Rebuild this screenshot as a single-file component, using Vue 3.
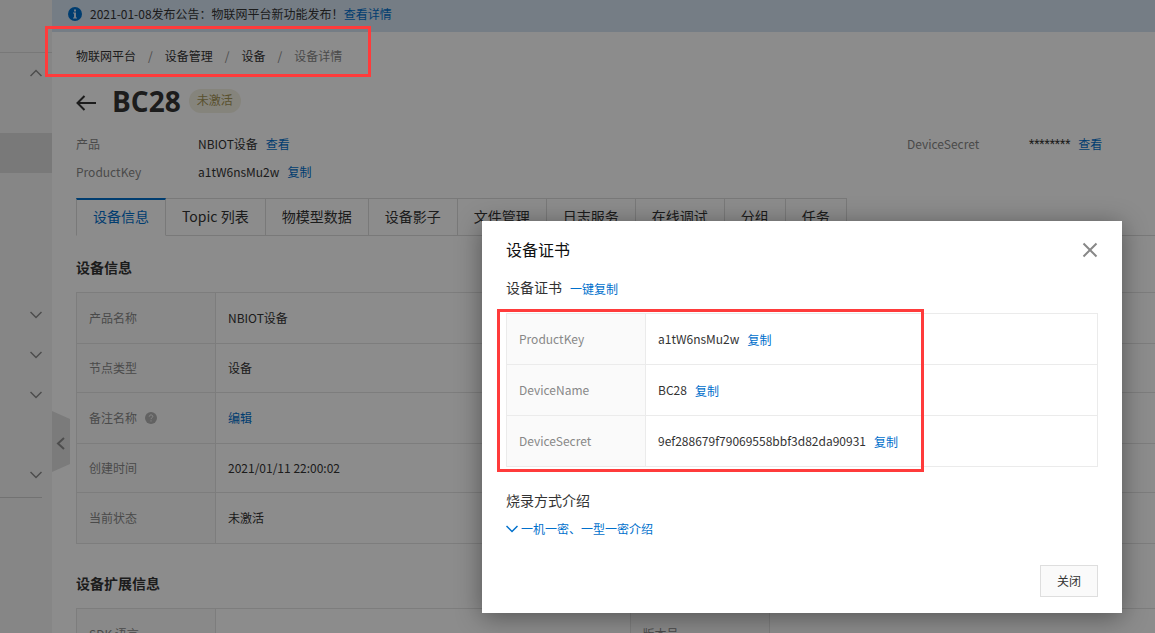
<script setup>
const crumbs = ['物联网平台', '设备管理', '设备', '设备详情']
const tabs = ['设备信息', 'Topic 列表', '物模型数据', '设备影子', '文件管理', '日志服务', '在线调试', '分组', '任务']
const rows = [
  { label: '产品名称', value: 'NBIOT设备' },
  { label: '节点类型', value: '设备' },
  { label: '备注名称', link: '编辑', help: true },
  { label: '创建时间', value: '2021/01/11 22:00:02' },
  { label: '当前状态', value: '未激活' }
]
const cert = [
  { label: 'ProductKey', value: 'a1tW6nsMu2w' },
  { label: 'DeviceName', value: 'BC28' },
  { label: 'DeviceSecret', value: '9ef288679f79069558bbf3d82da90931' }
]
</script>

<template>
  <div class="shell">
    <div class="page">
      <nav class="side" aria-label="导航">
        <div class="side-head"></div>
        <button class="side-item" aria-label="收起分组">
          <svg width="12" height="8" viewBox="0 0 12 8"><path d="M.500 7 6 1.500 11.500 7" /></svg>
        </button>
        <div class="side-item"></div>
        <div class="side-item active"></div>
        <div class="side-item"></div>
        <div class="side-item"></div>
        <div class="side-item"></div>
        <div class="side-group">
          <button v-for="n in 3" :key="n" class="side-item" aria-label="展开分组">
            <svg width="12" height="8" viewBox="0 0 12 8"><path d="M.500 1 6 6.500 11.500 1" /></svg>
          </button>
          <div class="side-item"></div>
          <button class="side-item" aria-label="展开分组">
            <svg width="12" height="8" viewBox="0 0 12 8"><path d="M.500 1 6 6.500 11.500 1" /></svg>
          </button>
        </div>
        <button class="handle" aria-label="收起导航">
          <svg width="18" height="61" viewBox="0 0 18 61">
            <path class="handle-bg" d="M0 0 18 8V53L0 61Z" />
            <path d="M12 27 6 32.500 12 38" />
          </svg>
        </button>
      </nav>

      <main class="main">
        <div class="notice">
          <svg width="14" height="14" viewBox="0 0 14 14">
            <circle cx="7" cy="7" r="7" fill="#0070cc" />
            <path d="M6 2.500h2v2H6zM5 5.500h3v5h1v1H5v-1h1v-4H5z" fill="#d6e8fb" />
          </svg>
          <span>2021-01-08发布公告：物联网平台新功能发布！</span>
          <a href="#">查看详情</a>
        </div>
        <div class="content">
          <div class="crumbs">
            <template v-for="(c, i) in crumbs" :key="c">
              <span v-if="i" class="slash">/</span>
              <a v-if="i < 3" href="#" class="crumb">{{ c }}</a>
              <span v-else class="crumb last">{{ c }}</span>
            </template>
          </div>
          <div class="title-row">
            <button class="back" aria-label="返回">
              <svg width="20" height="16" viewBox="0 0 20 16"><path d="M20 8H2M8.500 1 1.500 8l7 7" /></svg>
            </button>
            <h1>BC28</h1>
            <span class="badge">未激活</span>
          </div>
          <div class="info">
            <div class="field"><span class="key">产品</span><span>NBIOT设备</span><a href="#">查看</a></div>
            <div class="field"><span class="key">DeviceSecret</span><span class="stars">********</span><a href="#">查看</a></div>
            <div class="field"><span class="key">ProductKey</span><span>a1tW6nsMu2w</span><a href="#">复制</a></div>
          </div>
          <div class="tabs" role="tablist">
            <button v-for="(t, i) in tabs" :key="t" role="tab" :class="['tab', { on: i === 0 }]">{{ t }}</button>
          </div>
          <h2>设备信息</h2>
          <table class="grid">
            <tbody>
              <tr v-for="r in rows" :key="r.label">
                <th scope="row">
                  <div class="cell">
                    {{ r.label }}
                    <svg v-if="r.help" width="12" height="12" viewBox="0 0 12 12">
                      <circle cx="6" cy="6" r="6" fill="#b2b2b2" />
                      <path d="M4.200 4.700C4.200 2.300 7.900 2.400 7.800 4.600 7.700 5.700 6 5.800 6 7.200M6 8.300v1.200" class="mark" />
                    </svg>
                  </div>
                </th>
                <td colspan="3"><a v-if="r.link" href="#">{{ r.link }}</a><span v-else>{{ r.value }}</span></td>
              </tr>
            </tbody>
          </table>
          <h2 class="second">设备扩展信息</h2>
          <table class="grid">
            <tbody>
              <tr>
                <th scope="row">SDK 语言</th>
                <td></td>
                <th scope="row">版本号</th>
                <td></td>
              </tr>
            </tbody>
          </table>
        </div>
      </main>
    </div>

    <div class="mask">
      <section class="dialog" role="dialog" aria-labelledby="dialog-title">
        <header>
          <h3 id="dialog-title">设备证书</h3>
          <button class="close" aria-label="关闭窗口">
            <svg width="16" height="16" viewBox="0 0 16 16"><path d="M1.500 1.500l13 13M14.500 1.500l-13 13" /></svg>
          </button>
        </header>
        <div class="sub"><h4>设备证书</h4><a href="#">一键复制</a></div>
        <div class="cert">
          <table>
            <tbody>
              <tr v-for="c in cert" :key="c.label">
                <th scope="row">{{ c.label }}</th>
                <td><div class="cell"><span>{{ c.value }}</span><a href="#">复制</a></div></td>
              </tr>
            </tbody>
          </table>
          <div class="marker cert-marker"></div>
        </div>
        <h4>烧录方式介绍</h4>
        <a href="#" class="more">
          <svg width="12" height="8" viewBox="0 0 12 8"><path d="M.500 1 6 6.500 11.500 1" /></svg>一机一密、一型一密介绍
        </a>
        <footer><button class="ok">关闭</button></footer>
      </section>
    </div>
    <div class="marker crumb-marker"></div>
  </div>
</template>

<style>
body {
  margin: 0;
}
</style>

<style scoped>
.shell {
  position: relative;
  height: 100vh;
  overflow: hidden;
  background: #fff;
  color: #333;
  font: 12px/20px "Noto Sans CJK SC", "Open Sans", sans-serif;
}
.shell * {
  box-sizing: border-box;
}
a {
  color: #0070cc;
  text-decoration: none;
}
button {
  font: inherit;
  color: inherit;
  border: 0;
  padding: 0;
  background: none;
}
svg {
  display: block;
  flex: none;
  fill: none;
}
h1, h2, h3, h4 {
  margin: 0;
}
.page {
  display: flex;
  min-width: 1208px;
  min-height: 100%;
}
.side {
  position: relative;
  flex: none;
  width: 52px;
  background: #f5f5f5;
}
.side-head {
  height: 53px;
  border-bottom: 1px solid #dadada;
}
.side-item {
  display: flex;
  align-items: center;
  justify-content: flex-end;
  width: 100%;
  height: 40px;
  padding-right: 10px;
}
.side-item path, .handle path {
  stroke: #8c8c8c;
  stroke-width: 1.5;
}
.handle path {
  stroke-width: 2;
}
.active {
  background: #dcdcdc;
}
.side-group {
  width: 42px;
  margin-top: 2px;
  padding-bottom: 2px;
  border-bottom: 1px solid #d0d0d0;
}
.side-group .side-item {
  padding-right: 0;
}
.handle {
  position: absolute;
  left: 52px;
  top: 411px;
}
.handle .handle-bg {
  fill: #e0e0e0;
  stroke: none;
}
.main {
  flex: 1;
}
.notice {
  display: flex;
  align-items: center;
  gap: 8px;
  height: 32px;
  padding: 0 16px 4px;
  background: #d5e4f3;
}
.notice span {
  margin-right: -8px;
}
.content {
  padding: 14px 24px 0;
}
.crumbs {
  display: flex;
  gap: 12px;
}
.crumb {
  color: #333;
}
.slash, .crumb.last {
  color: #888;
}
.title-row {
  display: flex;
  align-items: center;
  height: 32px;
  margin: 19px 0 17px;
}
.back {
  padding-top: 4px;
}
.back path {
  stroke: #333;
  stroke-width: 2;
}
h1 {
  margin-left: 16px;
  font-family: "Open Sans", sans-serif;
  font-size: 28px;
  line-height: 32px;
}
.badge {
  margin-left: 8px;
  padding: 1px 8px 3px;
  border-radius: 12px;
  background: #f3f0e2;
  color: #a39455;
}
.info {
  display: grid;
  grid-template-columns: 3fr 1fr;
  gap: 8px 0;
}
.field {
  display: flex;
}
.field a {
  margin-left: 8px;
}
.stars {
  font-family: Roboto, sans-serif;
}
.key {
  width: 122px;
  color: #888;
}
.tabs {
  display: flex;
  height: 38px;
  margin: 16px -24px 21px 0;
  border-bottom: 1px solid #dcdcdc;
}
.tab {
  height: 38px;
  padding: 0 16px 2px;
  border: 1px solid #dcdcdc;
  border-left: 0;
  font-size: 14px;
}
.tab.on {
  border-left: 1px solid #dcdcdc;
  border-top: 2px solid #0070cc;
  border-bottom-color: #fff;
  padding-bottom: 4px;
  color: #0070cc;
}
h2 {
  margin-bottom: 15px;
  font-size: 14px;
  line-height: 20px;
}
.second {
  margin-top: 29px;
}
table {
  width: 100%;
  border-collapse: collapse;
  table-layout: fixed;
}
th, td {
  height: 51px;
  padding: 0 12px;
  border: 1px solid #ebebeb;
  text-align: left;
  font-weight: 400;
}
th {
  width: 139px;
  background: #fafafa;
  color: #888;
}
.grid th, .grid td {
  border-color: #e3e3e3;
}
.grid tr:nth-child(even) > * {
  height: 49px;
}
.cell {
  display: flex;
  align-items: center;
  gap: 8px;
}
.mark {
  stroke: #fafafa;
  stroke-width: 1;
}
.mask {
  position: absolute;
  inset: 0;
  display: flex;
  align-items: flex-end;
  justify-content: flex-end;
  padding: 0 33px 20px;
  background: rgba(0, 0, 0, 0.45);
}
.dialog {
  width: 640px;
  padding: 16px 24px;
  background: #fff;
  box-shadow: 0 4px 24px rgba(0, 0, 0, 0.4);
}
header {
  display: flex;
  align-items: center;
  justify-content: space-between;
  margin-bottom: 16px;
}
h3 {
  color: #111;
  font-size: 16px;
  line-height: 24px;
  font-weight: 400;
}
.close {
  padding-top: 2px;
}
.close path {
  stroke: #888;
  stroke-width: 2;
}
h4 {
  font-size: 14px;
  line-height: 20px;
  font-weight: 400;
}
.sub {
  display: flex;
  align-items: flex-start;
  gap: 8px;
  height: 20px;
  margin-bottom: 16px;
}
.sub a, .cert a {
  padding-top: 2px;
}
.cert {
  position: relative;
  margin-bottom: 23px;
}
.marker {
  position: absolute;
  border: 3px solid #ff3b3b;
}
.cert-marker {
  left: -9px;
  top: -4px;
  width: 427px;
  height: 163px;
}
.crumb-marker {
  left: 45px;
  top: 26px;
  width: 326px;
  height: 51px;
}
.more {
  display: flex;
  align-items: center;
  gap: 3px;
  margin: 9px 0 26px;
}
.more path {
  stroke: #0070cc;
  stroke-width: 1.5;
}
footer {
  display: flex;
  justify-content: flex-end;
}
.ok {
  width: 58px;
  height: 32px;
  border: 1px solid #dedede;
  background: #fafafa;
}
</style>
